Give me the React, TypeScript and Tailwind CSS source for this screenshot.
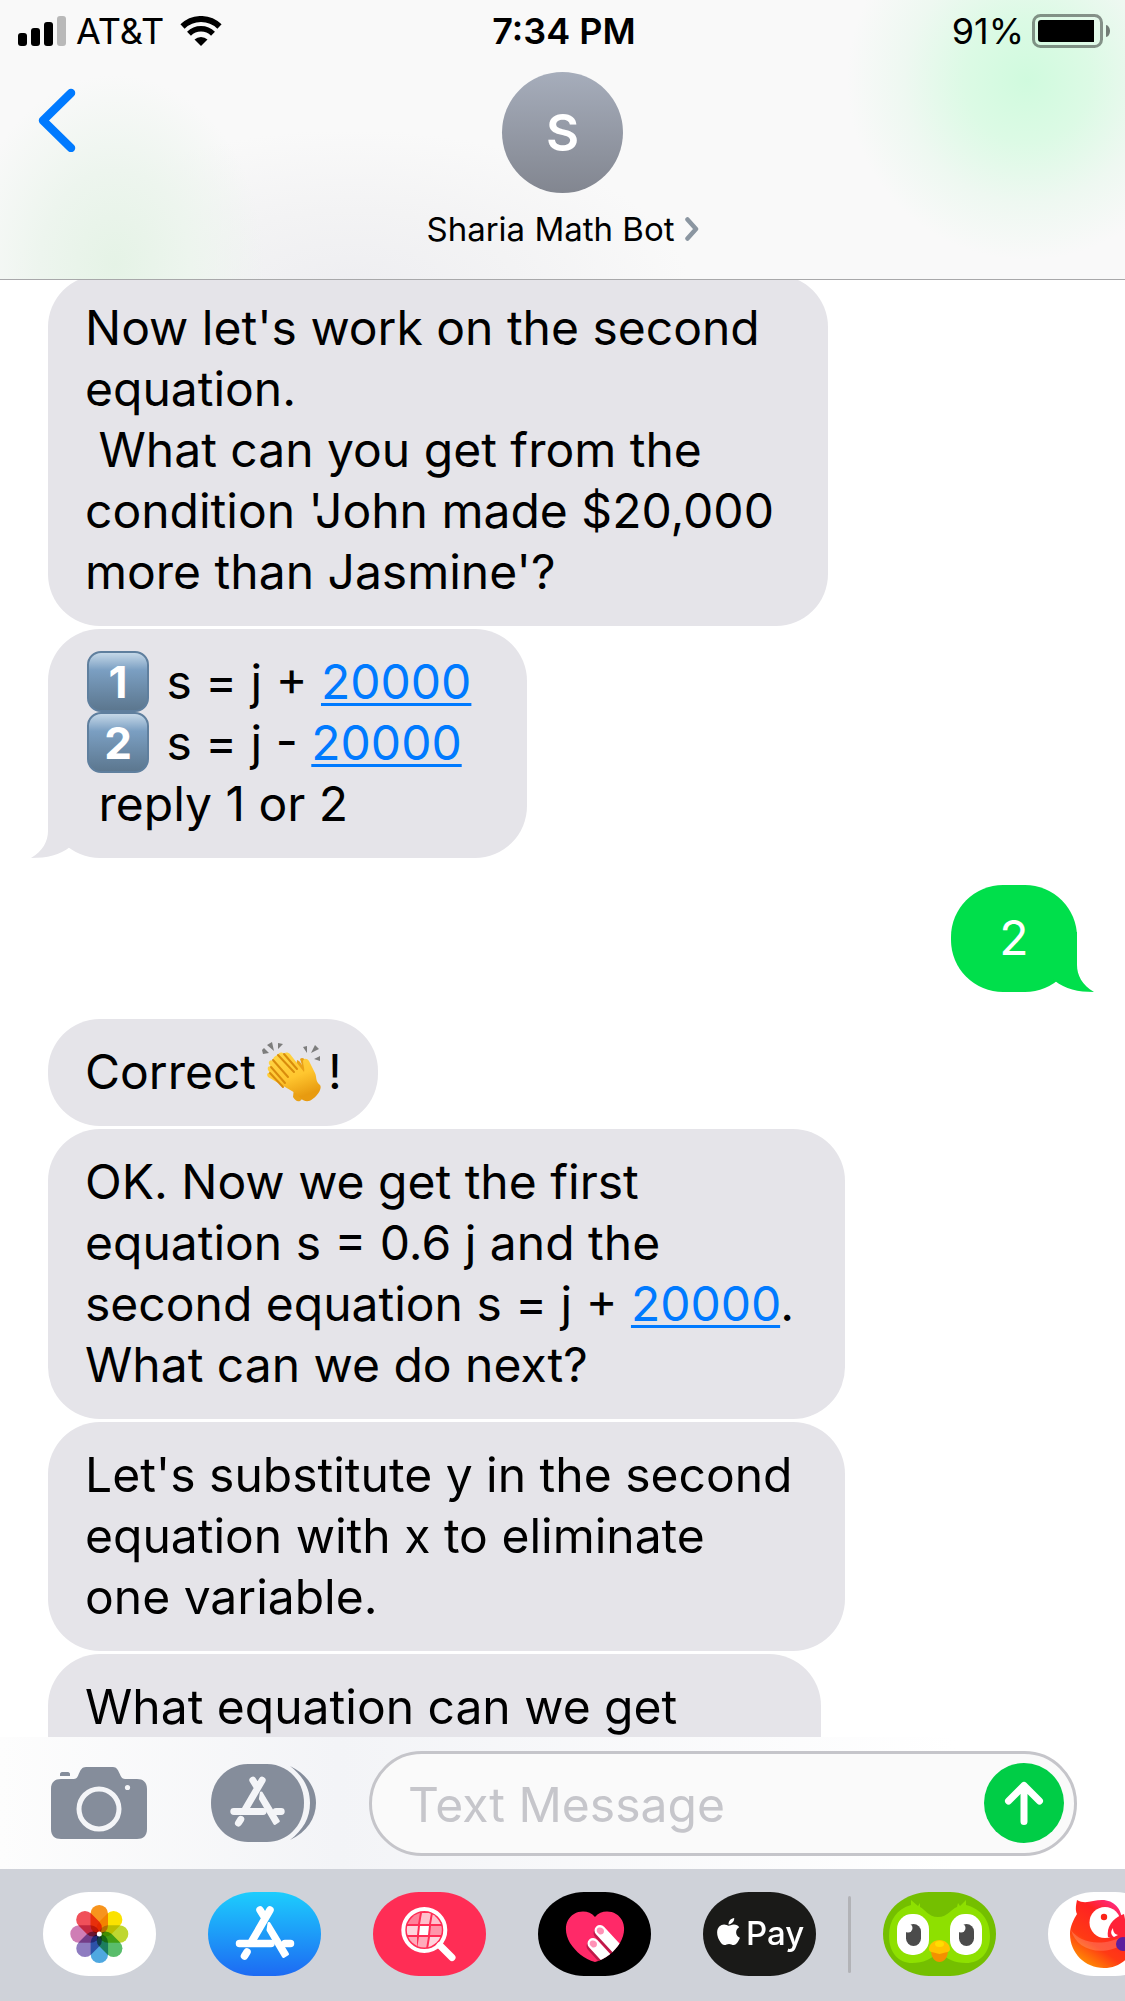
import { useState } from "react";
import type { ReactNode } from "react";
import { FaApple } from "react-icons/fa";

interface Message {
  id: number;
  from: "bot" | "me";
  width: string;
  startsGroup?: boolean;
  tail?: boolean;
  lines: ReactNode[];
}

function NumberLink({ children }: { children: string }) {
  return (
    <a href={`tel:${children}`} className="text-[#007aff] underline decoration-3 underline-offset-4">
      {children}
    </a>
  );
}

function Keycap({ digit }: { digit: number }) {
  return (
    <span className="mr-1 ml-0.5 inline-flex h-[61px] w-[62px] items-center justify-center rounded-[14px] border-2 border-[#5f7f9e] bg-linear-to-b from-[#c5d8e8] via-[#7b9fc2] via-30% to-[#5c778f] align-top text-[44px] leading-none font-bold text-white">
      {digit}
    </span>
  );
}

function ClapEmoji() {
  return (
    <svg role="img" aria-label="clapping hands" viewBox="0 0 60 62" className="mx-1.5 inline-block h-[62px] w-[60px] align-top">
      <defs>
        <linearGradient id="skin" x1="0" y1="0" x2="0.4" y2="1">
          <stop offset="0" stopColor="#ffd84a" />
          <stop offset="0.6" stopColor="#ffc62f" />
          <stop offset="1" stopColor="#e89b10" />
        </linearGradient>
      </defs>
      <g fill="#7d7d7d">
        <path d="M5 4 10 1l2 9zM0 9l2-2 5 5-6 1zM16 2l5 1-5 5zM41 6l4-1v7zM49 12l4-8 4 4zM52 18l6-3v5z" />
      </g>
      <path d="M35 19c3 1 5 4 6 8l-3-9c2-2 4-1 6 2l8 13c2 4 2 8 1 12L38 60c-3 1-5-1-7-4z" fill="#e9a117" />
      <path
        d="M16 14c1-3 4-3 6-1 1-2 4-2 6 0l14 18c1-3-1-7-1-11 1-3 4-3 6 0l6 12c2 4 0 8 5 12 3 4-5 14-11 16-6 1-9-3-12-7L6 36c-2-3 0-5 2-4l-2-3c-1-3 1-5 3-3l-2-3c-1-3 2-5 4-3-1-3 3-6 5-6z"
        fill="url(#skin)"
      />
      <path d="M16 14l16 17M11 19l15 17M9 26l14 16M8 32l13 14M22 13l13 15" fill="none" stroke="#d98c0c" strokeWidth="2" strokeLinecap="round" />
    </svg>
  );
}

const MESSAGES: Message[] = [
  {
    id: 1,
    from: "bot",
    width: "w-[780px]",
    lines: [
      "Now let's work on the second",
      "equation.",
      " What can you get from the",
      "condition 'John made $20,000",
      "more than Jasmine'?",
    ],
  },
  {
    id: 2,
    from: "bot",
    width: "w-[479px]",
    tail: true,
    lines: [
      <>
        <Keycap digit={1} /> s = j + <NumberLink>20000</NumberLink>
      </>,
      <>
        <Keycap digit={2} /> s = j - <NumberLink>20000</NumberLink>
      </>,
      " reply 1 or 2",
    ],
  },
  { id: 3, from: "me", width: "w-[126px]", startsGroup: true, tail: true, lines: ["2"] },
  {
    id: 4,
    from: "bot",
    width: "w-[330px]",
    startsGroup: true,
    lines: [
      <>
        Correct
        <ClapEmoji />!
      </>,
    ],
  },
  {
    id: 5,
    from: "bot",
    width: "w-[797px]",
    lines: [
      "OK. Now we get the first",
      "equation s = 0.6 j and the",
      <>
        second equation s = j + <NumberLink>20000</NumberLink>.
      </>,
      "What can we do next?",
    ],
  },
  {
    id: 6,
    from: "bot",
    width: "w-[797px]",
    lines: ["Let's substitute y in the second", "equation with x to eliminate", "one variable."],
  },
  { id: 7, from: "bot", width: "w-[773px]", lines: ["What equation can we get", ""] },
];

function StatusBar() {
  return (
    <div className="grid h-16 grid-cols-[1fr_auto_1fr] items-center pr-[15px] pb-0.5 pl-[18px] text-[36px] leading-none">
      <div className="flex items-center">
        <svg viewBox="0 0 48 30" className="mr-2.5 h-[30px] w-12" aria-label="Signal strength">
          <rect x="0" y="17" width="9" height="13" rx="3" />
          <rect x="13" y="12" width="9" height="18" rx="3" />
          <rect x="26" y="6" width="9" height="24" rx="3" />
          <rect x="39" y="0" width="9" height="30" rx="3" fill="#b9b9b9" />
        </svg>
        <span>AT&amp;T</span>
        <svg viewBox="0 0 42 30" className="ml-4 h-[30px] w-[42px]" aria-label="Wi-Fi">
          <path d="M2.500 10.500a26.500 26.500 0 0 1 37 0" fill="none" stroke="#000" strokeWidth="6" />
          <path d="M9 17.800a17 17 0 0 1 24 0" fill="none" stroke="#000" strokeWidth="5.500" />
          <path d="M14.500 23.500a9.500 9.500 0 0 1 13 0L21 30z" />
        </svg>
      </div>
      <span className="font-semibold">7:34 PM</span>
      <div className="flex items-center justify-end gap-2">
        <span>91%</span>
        <svg viewBox="0 0 78 34" className="h-[34px] w-[78px]" aria-label="Battery">
          <rect x="1.500" y="1.500" width="68" height="31" rx="7" fill="none" stroke="#000" strokeOpacity="0.42" strokeWidth="3" />
          <path d="M9 6h53v22H9a3 3 0 0 1-3-3V9a3 3 0 0 1 3-3z" />
          <path d="M74 11c2 0 4 3 4 6s-2 6-4 6z" fillOpacity="0.5" />
        </svg>
      </div>
    </div>
  );
}

function ChatHeader() {
  return (
    <header className="relative z-10 h-[280px] shrink-0 border-b border-[#a8a8aa] bg-[#f9f9f9] bg-[radial-gradient(circle_180px_at_1027px_80px,#d0fade_0%,#dcfae5_35%,#eef8f1_68%,transparent_100%),radial-gradient(ellipse_150px_190px_at_115px_265px,#e5f3e6_0%,#edf5ee_50%,transparent_100%),radial-gradient(ellipse_340px_160px_at_350px_290px,#eeeef1_0%,#f3f3f4_50%,transparent_100%)]">
      <StatusBar />
      <div className="grid grid-cols-[1fr_auto_1fr] items-start px-[38px] pt-2">
        <button type="button" aria-label="Back" className="mt-4 w-10">
          <svg viewBox="0 0 40 64" className="h-16 w-10">
            <path d="M33 5 5 32.500 33 60" fill="none" stroke="#007aff" strokeWidth="8.500" strokeLinecap="round" strokeLinejoin="round" />
          </svg>
        </button>
        <button type="button" className="flex flex-col items-center">
          <span className="flex size-[121px] items-center justify-center rounded-full bg-linear-to-b from-[#a6adbb] to-[#828690] pt-0.5 text-[51px] font-semibold text-white">
            S
          </span>
          <span className="mt-4 flex items-center gap-2.5 text-[33px] leading-10">
            Sharia Math Bot
            <svg viewBox="0 0 14 24" className="h-6 w-3.5">
              <path d="m2.500 2.500 8.500 9.500-8.500 9.500" fill="none" stroke="#8b96a1" strokeWidth="4.500" strokeLinecap="round" strokeLinejoin="round" />
            </svg>
          </span>
        </button>
      </div>
    </header>
  );
}

function Bubble({ message }: { message: Message }) {
  const mine = message.from === "me";
  return (
    <li
      className={`relative rounded-[52px] pt-[22px] pb-6 text-[48px] leading-[61px] whitespace-pre ${message.width} ${
        message.startsGroup ? "mt-[27px]" : "mt-[3px] first:mt-0"
      } ${mine ? "self-end bg-[#00df4b] text-center text-white" : "self-start bg-[#e5e4e9] pl-[37px] text-black"}`}
    >
      {message.lines.map((line, i) => (
        <p key={i} className="h-[61px]">
          {line}
        </p>
      ))}
      {message.tail && (
        <svg
          viewBox="0 0 54 60"
          className={`absolute bottom-0 h-[60px] w-[54px] ${
            mine ? "-right-[17px] -scale-x-100 fill-[#00df4b]" : "-left-[17px] fill-[#e5e4e9]"
          }`}
        >
          <path d="M17 0v33C17 43 12 53 0 60c16 0 29-3 39-11l6-6 0-43z" />
        </svg>
      )}
    </li>
  );
}

function StoreGlyph() {
  return (
    <g stroke="currentColor" fill="currentColor" strokeLinecap="round" strokeLinejoin="round">
      <path d="M62 18 44 49M52 18l5 8" fill="none" strokeWidth="7.500" />
      <path d="M31.500 51.500H63M77 51.500h5.500" fill="none" strokeWidth="7.500" />
      <path d="m39 60-2.500 4" fill="none" strokeWidth="7.500" />
      <path d="M61 31.500 79.500 62l-4 2.500L60 38z" strokeWidth="3" />
    </g>
  );
}

function Composer() {
  const [text, setText] = useState("");
  return (
    <form
      onSubmit={(e) => e.preventDefault()}
      className="flex h-[132px] shrink-0 items-center bg-linear-to-r from-[#fdfdfd] via-[#f3f4f7] via-30% to-white to-85% pr-12 pl-[51px]"
    >
      <button type="button" aria-label="Camera" className="mr-16 shrink-0">
        <svg viewBox="0 0 96 72" className="h-[72px] w-24 fill-[#858d9b]">
          <path d="M0 22c0-7 4-10 10-10h13c6 0 4-12 12-12h27c7 0 6 12 12 12h12c6 0 10 3 10 10v40c0 7-4 10-10 10H10C4 72 0 69 0 62z" />
          <path d="M9 7c0-1 1-2 2-2h6c1 0 2 1 2 2v2H9z" />
          <circle cx="48" cy="42" r="20" fill="none" stroke="#f4f5f8" strokeWidth="5" />
          <circle cx="76.500" cy="20.500" r="2.600" fill="#f4f5f8" />
        </svg>
      </button>
      <button type="button" aria-label="iMessage apps" className="mr-[53px] shrink-0">
        <svg viewBox="0 0 105 78" className="h-[78px] w-[105px] fill-[#858d9b] text-[#f4f5f8]">
          <path d="M0 39C0 15 18 0 37 0h19c19 0 37 15 37 39S75 78 56 78H37C18 78 0 63 0 39z" />
          <path d="M79 2c17 8 26 22 26 37s-9 29-26 37c13-10 20-22 20-37S92 12 79 2z" />
          <g transform="translate(-6.500 -.5) scale(.93)">
            <StoreGlyph />
          </g>
        </svg>
      </button>
      <div className="flex h-[105px] min-w-0 flex-1 items-center rounded-full border-3 border-[#c5c5ca] bg-[#fafafa] pr-2.5 pl-9">
        <input
          type="text"
          aria-label="Text Message"
          placeholder="Text Message"
          value={text}
          onChange={(e) => setText(e.target.value)}
          className="h-20 min-w-0 flex-1 bg-transparent pt-0.5 text-[48px] placeholder-[#c6c6cb] outline-none"
        />
        <button type="submit" aria-label="Send" className="shrink-0">
          <svg viewBox="0 0 80 80" className="size-20">
            <circle cx="40" cy="40" r="40" fill="#00cd46" />
            <path d="M40 22.500v36M24.500 38 40 22.500 55.500 38" fill="none" stroke="#fff" strokeWidth="7" strokeLinecap="round" strokeLinejoin="round" />
          </svg>
        </button>
      </div>
    </form>
  );
}

const CAPSULE = "M0 42C0 16 24 0 46 0h21c22 0 46 16 46 42S89 84 67 84H46C24 84 0 68 0 42z";

const PETALS = [
  ["#f7941d", 0],
  ["#fbe200", 45],
  ["#bfd730", 90],
  ["#59bd6b", 135],
  ["#4fa8e0", 180],
  ["#8e7cc0", 225],
  ["#cf7db5", 270],
  ["#f0505a", 315],
] as const;

function AppButton({ label, fill, children }: { label: string; fill: string; children: ReactNode }) {
  return (
    <button type="button" aria-label={label} className="shrink-0">
      <svg viewBox="0 0 113 84" className="h-[84px] w-[113px]">
        <path d={CAPSULE} fill={fill} />
        {children}
      </svg>
    </button>
  );
}

function AppDock() {
  return (
    <nav aria-label="Apps" className="flex h-[132px] shrink-0 items-center gap-[52px] overflow-hidden bg-[#cfd2d9] pb-0.5 pl-[43px]">
      <AppButton label="Photos" fill="#fff">
        <g className="isolate">
          {PETALS.map(([color, angle]) => (
            <rect
              key={angle}
              x="47.500"
              y="13"
              width="17.500"
              height="29"
              rx="8.700"
              fill={color}
              transform={`rotate(${angle} 56.300 42)`}
              className="mix-blend-multiply"
            />
          ))}
        </g>
        <circle cx="56.300" cy="42" r="2.500" fill="#fff" />
      </AppButton>

      <AppButton label="App Store" fill="url(#store)">
        <defs>
          <linearGradient id="store" x1="0" y1="0" x2="0" y2="1">
            <stop offset="0" stopColor="#1dcdfd" />
            <stop offset="1" stopColor="#1d6af3" />
          </linearGradient>
        </defs>
        <g className="text-white">
          <StoreGlyph />
        </g>
      </AppButton>

      <AppButton label="#images" fill="#ff2d55">
        <clipPath id="lens">
          <circle cx="51.300" cy="38" r="17.500" />
        </clipPath>
        <g clipPath="url(#lens)" fill="#fff">
          <path d="M34 21h13l-2 11H33z" opacity=".4" />
          <path d="M49 21h9l-2 11h-9z" opacity=".7" />
          <path d="M60 21h10v11H58z" opacity=".7" />
          <path d="M32 34h13l-1 9H32z" opacity=".8" />
          <path d="M47 34h9l-1 9h-9z" />
          <path d="M58 34h13v9H57z" opacity=".5" />
          <path d="M32 45h12v12H34z" opacity=".6" />
          <path d="M46 45h9l-2 12h-9z" opacity=".6" />
          <path d="M57 45h12v12H55z" opacity=".8" />
        </g>
        <circle cx="51.300" cy="38" r="21" fill="none" stroke="#fff" strokeWidth="4" />
        <path d="m67 53.500 12 12" stroke="#fff" strokeWidth="7" strokeLinecap="round" />
      </AppButton>

      <AppButton label="Digital Touch" fill="#000">
        <clipPath id="heart">
          <path d="M57 25c5-6 14-7 21-3 10 6 10 19 4 29-6 9-14 16-25 19-11-3-19-10-25-19-6-10-6-23 4-29 7-4 16-3 21 3z" />
        </clipPath>
        <g clipPath="url(#heart)">
          <rect width="113" height="84" fill="#ff2968" />
          <path d="M61 41 88 71M54 54l26 29" stroke="#a3123c" strokeOpacity=".7" strokeWidth="11" strokeLinecap="round" />
          <path d="M62 38.500 92 71M55 51.500 85 84" stroke="#fff" strokeWidth="11" strokeLinecap="round" />
          <path d="M59 37c2-3 7-1 7 2 0 4-4 4-5 3s-3-2-2-5zM52 50c2-3 7-1 7 2 0 4-4 4-5 3s-3-2-2-5z" fill="#ff92b6" />
        </g>
      </AppButton>

      <AppButton label="Apple Pay" fill="#1a1a18">
        <FaApple x="10" y="24" size={31} color="#fff" />
        <text x="43" y="53" fill="#fff" fontSize="33" fontWeight="500">
          Pay
        </text>
      </AppButton>

      <span className="-mx-5 h-[77px] w-[3px] shrink-0 rounded-full bg-[#b2b3b7]" />

      <AppButton label="Duolingo" fill="#74bf00">
        <path
          d="M6 44c0-16 8-27 22-31V8l7 6 2-3v4c5 2 8 10 18 10s13-8 19-10l1-4 2 3 6-6v5c15 4 24 15 24 31 0 17-10 27-24 27-12 0-18-4-27-10-9 6-15 10-27 10C16 71 6 61 6 44z"
          fill="#8ee000"
        />
        <rect x="14" y="22" width="32" height="41" rx="15" fill="#fff" />
        <rect x="67" y="22" width="32" height="41" rx="15" fill="#fff" />
        <rect x="23" y="32" width="15" height="22" rx="7.500" fill="#4b4b4b" />
        <rect x="76" y="32" width="15" height="22" rx="7.500" fill="#4b4b4b" />
        <circle cx="25" cy="36" r="4.500" fill="#fff" />
        <circle cx="78" cy="36" r="4.500" fill="#fff" />
        <path d="M48 58h17c0 8-4 12-8.500 12S48 66 48 58z" fill="#f49000" />
        <path d="M46 57c0-5 5-9 10.500-9S67 52 67 57c0 4-5 3-10.500 5C51 60 46 61 46 57z" fill="#ffc200" />
        <ellipse cx="56.500" cy="52" rx="4.500" ry="3" fill="#ffde00" />
      </AppButton>

      <AppButton label="Bird stickers" fill="#fff">
        <defs>
          <linearGradient id="bird" x1="0.9" y1="0" x2="0.2" y2="1">
            <stop offset="0" stopColor="#ff2fc0" />
            <stop offset="0.35" stopColor="#ff2222" />
            <stop offset="0.7" stopColor="#ff3a14" />
            <stop offset="1" stopColor="#ff9a00" />
          </linearGradient>
        </defs>
        <path d="M29 8c8 5 16 0 25 0 12 0 20 9 20 21 7 4 14 3 17 6 0 23-15 41-35 41-19 0-34-15-34-34 0-8 4-15 7-20-2-4-1-9 0-14z" fill="url(#bird)" />
        <path d="M23 38c8 12 29 18 53 6v8c-24 14-48 5-53-14z" fill="#fff" opacity=".18" />
        <circle cx="57" cy="30.500" r="15.500" fill="#fff" />
        <path d="M76 22c-9 3-18 11-16 23 7 2 16 2 20-2z" fill="#ff2238" />
        <path d="M65 36c-3 4-2 7 1 9l4-2c-4-1-5-4-5-7z" fill="#fff" />
        <circle cx="56" cy="25" r="3.200" fill="#fb2318" />
        <circle cx="75" cy="52" r="7" fill="#5d1f9e" />
      </AppButton>
    </nav>
  );
}

export default function App() {
  return (
    <div className="flex h-screen flex-col overflow-hidden bg-white font-[Inter,'Liberation_Sans',sans-serif] text-black">
      <ChatHeader />
      <main className="-mt-[5px] min-h-0 flex-1 overflow-hidden">
        <ul className="flex flex-col px-12">
          {MESSAGES.map((m) => (
            <Bubble key={m.id} message={m} />
          ))}
        </ul>
      </main>
      <Composer />
      <AppDock />
    </div>
  );
}
